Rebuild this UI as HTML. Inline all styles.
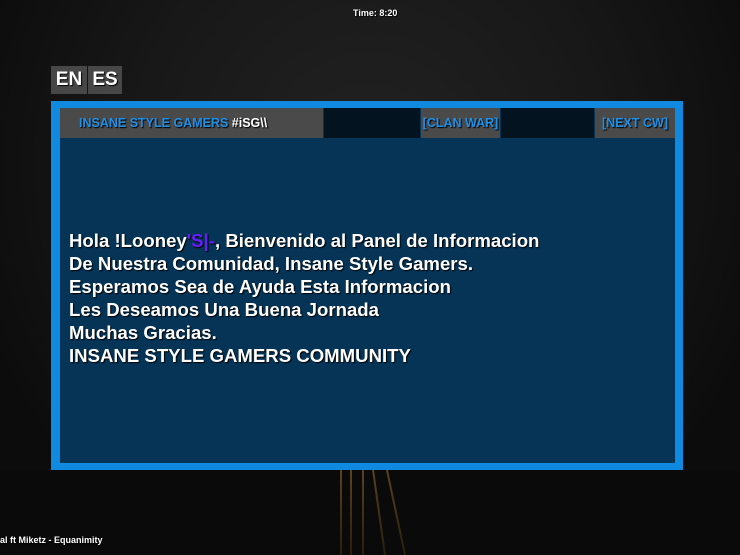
<!DOCTYPE html>
<html><head><style>
body{margin:0;width:740px;height:555px;overflow:hidden;background:#111;font-family:"Liberation Sans",sans-serif;position:relative}
.bg{position:absolute;inset:0;background:radial-gradient(ellipse at 50% 30%,#222 0%,#181818 45%,#0c0c0c 80%)}
.bot{position:absolute;left:0;right:0;top:470px;bottom:0;background:#0a0a0a}
.ray{position:absolute;top:470px;height:85px;width:2px;background:linear-gradient(#5a4420,#2a1e0c)}
.t{position:absolute;color:#fff;font-weight:bold;text-shadow:1px 1px 1px #000}
.btn{position:absolute;top:66px;height:28px;background:#474747;color:#fff;font-weight:bold;font-size:19px;line-height:28px;text-align:center;text-shadow:1px 1px 1px #000}
.frame{position:absolute;left:51px;top:101px;width:632px;height:369px;background:#0f8ae0}
.panel{position:absolute;left:60px;top:108px;width:615px;height:355px;background:#053457}
.h{position:absolute;top:108px;height:30px;line-height:30px;font-size:12.5px;font-weight:bold;color:#1e90e8;text-shadow:1px 1px 1px #000}
.g{background:#4a4a4a}.d{background:#03131f}
.txt{position:absolute;left:69px;top:229px;color:#fff;font-weight:bold;font-size:18.6px;line-height:23px;text-shadow:1px 1px 1px #000}
</style></head><body>
<div class="bg"></div><div class="bot"></div>
<div class="ray" style="left:340px"></div><div class="ray" style="left:350px"></div><div class="ray" style="left:362px"></div><div class="ray" style="left:378px;transform:skewX(8deg)"></div><div class="ray" style="left:395px;transform:skewX(12deg)"></div>
<div class="t" style="left:353px;top:8px;font-size:9px">Time: 8:20</div>
<div class="t" style="left:0;top:535px;font-size:9px">al ft Miketz - Equanimity</div>
<div class="btn" style="left:51px;width:36px">EN</div>
<div class="btn" style="left:88px;width:34px">ES</div>
<div class="frame"></div><div class="panel"></div>
<div class="h g" style="left:60px;width:263px;padding-left:19px;box-sizing:border-box">INSANE STYLE GAMERS <span style="color:#fff">#iSG\\</span></div>
<div class="h d" style="left:324px;width:96px"></div>
<div class="h g" style="left:421px;width:79px;text-align:center">[CLAN WAR]</div>
<div class="h d" style="left:501px;width:93px"></div>
<div class="h g" style="left:595px;width:80px;text-align:center">[NEXT CW]</div>
<div class="txt">Hola !Looney<span style="color:#6a1cff">'S|-</span>, Bienvenido al Panel de Informacion<br>De Nuestra Comunidad, Insane Style Gamers.<br>Esperamos Sea de Ayuda Esta Informacion<br>Les Deseamos Una Buena Jornada<br>Muchas Gracias.<br>INSANE STYLE GAMERS COMMUNITY</div>
</body></html>
